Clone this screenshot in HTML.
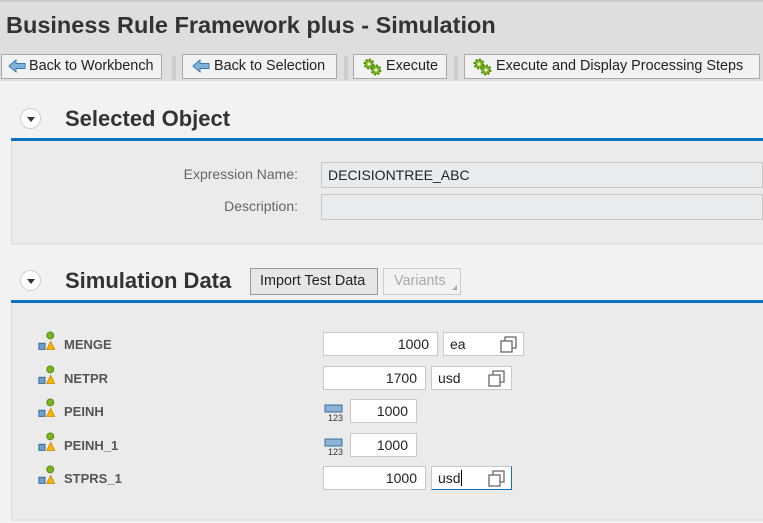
<!DOCTYPE html>
<html><head><style>
*{margin:0;padding:0;box-sizing:border-box}
body{width:763px;height:523px;overflow:hidden;background:#f2f2f2;font-family:"Liberation Sans",sans-serif;position:relative;color:#333}
.a{position:absolute}
.btn{position:absolute;top:54px;height:25px;border:1px solid #aaa;background:#f2f2f2;font-size:14.4px;line-height:23px;padding-left:6px;color:#222;white-space:nowrap}
.sep{position:absolute;top:56px;width:4px;height:24px;background:#ccc}
.inp{position:absolute;background:#fff;border:1px solid #c8c8c8;font-size:14px;line-height:22px;height:24px;color:#222}
.lbl{position:absolute;font-size:13px;font-weight:bold;color:#555}
.ic{position:absolute}
.tog{position:absolute;width:21px;height:21px;border-radius:50%;background:#fff;border:1px solid #ccc}
.tog:after{content:"";position:absolute;left:6px;top:8px;border-left:4px solid transparent;border-right:4px solid transparent;border-top:5px solid #333}
</style></head><body>
<div class="a" style="left:0;top:0;width:763px;height:53px;background:#dedede;border-top:2px solid #ccc"></div>
<div class="a" style="left:0;top:53px;width:763px;height:28px;background:#dedede"></div>
<div class="a" style="left:6px;top:12px;font-size:23.5px;font-weight:bold;color:#333">Business Rule Framework plus - Simulation</div>

<svg width="0" height="0" style="position:absolute"><defs>
<symbol id="arr" viewBox="0 0 18 14"><path d="M1 7 L8 1 L8 4.5 L17 4.5 L17 9.5 L8 9.5 L8 13 Z" fill="#7fb3d9" stroke="#3a79b0" stroke-width="1"/></symbol>
<symbol id="gear" viewBox="0 0 20 20"><circle cx="7" cy="7" r="4.5" fill="#7ab51d" stroke="#4f8a10" stroke-dasharray="2 1.5" stroke-width="2"/><circle cx="7" cy="7" r="1.5" fill="#fff"/><circle cx="14" cy="13" r="4.5" fill="#7ab51d" stroke="#4f8a10" stroke-dasharray="2 1.5" stroke-width="2"/><circle cx="14" cy="13" r="1.5" fill="#fff"/></symbol>
<symbol id="dt" viewBox="0 0 24 24"><circle cx="14" cy="5" r="4" fill="#7ab51d" stroke="#4f8a10"/><rect x="1" y="14" width="7" height="7" fill="#6fa0cc" stroke="#2a5f8f"/><path d="M10 21 L14.5 12 L19 21 Z" fill="#f5b800" stroke="#d48a00"/></symbol>
<symbol id="sel" viewBox="0 0 18 18"><rect x="1" y="5" width="11" height="11" fill="none" stroke="#666" stroke-width="1.3"/><path d="M5 5 V1 H16 V12 H12" fill="none" stroke="#666" stroke-width="1.3"/></symbol>
<symbol id="num" viewBox="0 0 20 18"><rect x="1" y="1" width="17" height="7" fill="#8db3d6" stroke="#3a6d99"/><text x="4" y="17" font-size="9" font-family="Liberation Sans" fill="#333">123</text></symbol>
</defs></svg>

<div class="btn" style="left:1px;width:161px;padding-left:27px">Back to Workbench<svg class="ic" style="left:6px;top:4px" width="18" height="14"><use href="#arr"/></svg></div>
<div class="sep" style="left:172px"></div>
<div class="btn" style="left:182px;width:155px;padding-left:31px">Back to Selection<svg class="ic" style="left:9px;top:4px" width="18" height="14"><use href="#arr"/></svg></div>
<div class="sep" style="left:344px"></div>
<div class="btn" style="left:353px;width:94px;padding-left:32px">Execute<svg class="ic" style="left:8px;top:2px" width="20" height="20"><use href="#gear"/></svg></div>
<div class="sep" style="left:454px"></div>
<div class="btn" style="left:464px;width:296px;padding-left:31px">Execute and Display Processing Steps<svg class="ic" style="left:7px;top:2px" width="20" height="20"><use href="#gear"/></svg></div>

<div class="tog" style="left:20px;top:108px"></div>
<div class="a" style="left:65px;top:106px;font-size:22px;font-weight:bold;color:#333">Selected Object</div>
<div class="a" style="left:11px;top:138px;width:752px;height:3px;background:#0a74c2"></div>
<div class="a" style="left:11px;top:141px;width:752px;height:104px;background:#ebebeb;border-left:1px solid #ddd;border-bottom:2px solid #e2e2e2"></div>
<div class="a" style="left:120px;top:166px;width:178px;text-align:right;font-size:14px;color:#666">Expression Name:</div>
<div class="a" style="left:120px;top:198px;width:178px;text-align:right;font-size:14px;color:#666">Description:</div>
<div class="inp" style="left:321px;top:162px;width:442px;height:26px;background:#e8ecef;padding-left:6px;line-height:24px">DECISIONTREE_ABC</div>
<div class="inp" style="left:321px;top:194px;width:442px;height:26px;background:#e8ecef"></div>

<div class="tog" style="left:20px;top:270px"></div>
<div class="a" style="left:65px;top:268px;font-size:22px;font-weight:bold;color:#333">Simulation Data</div>
<div class="btn" style="left:250px;top:268px;width:128px;height:27px;line-height:25px;padding-left:9px;background:#e6e6e6;border-color:#999">Import Test Data</div>
<div class="btn" style="left:383px;top:268px;width:78px;height:27px;line-height:25px;padding-left:10px;color:#aaa;border-color:#ccc">Variants<span style="position:absolute;right:3px;bottom:4px;border-left:5px solid transparent;border-bottom:5px solid #aaa"></span></div>
<div class="a" style="left:11px;top:300px;width:752px;height:3px;background:#0a74c2"></div>
<div class="a" style="left:11px;top:303px;width:752px;height:218px;background:#ebebeb;border-left:1px solid #ddd;border-bottom:2px solid #e2e2e2"></div>

<svg class="ic" style="left:38px;top:331px" width="21" height="21"><use href="#dt"/></svg><div class="lbl" style="left:64px;top:337px">MENGE</div>
<svg class="ic" style="left:38px;top:365px" width="21" height="21"><use href="#dt"/></svg><div class="lbl" style="left:64px;top:371px">NETPR</div>
<svg class="ic" style="left:38px;top:398px" width="21" height="21"><use href="#dt"/></svg><div class="lbl" style="left:64px;top:404px">PEINH</div>
<svg class="ic" style="left:38px;top:432px" width="21" height="21"><use href="#dt"/></svg><div class="lbl" style="left:64px;top:438px">PEINH_1</div>
<svg class="ic" style="left:38px;top:465px" width="21" height="21"><use href="#dt"/></svg><div class="lbl" style="left:64px;top:471px">STPRS_1</div>

<div class="inp" style="left:323px;top:332px;width:115px;text-align:right;padding-right:8px">1000</div>
<div class="inp" style="left:443px;top:332px;width:81px;padding-left:6px">ea<svg class="ic" style="left:56px;top:3px" width="18" height="18"><use href="#sel"/></svg></div>
<div class="inp" style="left:323px;top:366px;width:103px;text-align:right;padding-right:8px">1700</div>
<div class="inp" style="left:431px;top:366px;width:81px;padding-left:6px">usd<svg class="ic" style="left:56px;top:3px" width="18" height="18"><use href="#sel"/></svg></div>
<svg class="ic" style="left:324px;top:404px" width="20" height="18"><use href="#num"/></svg>
<div class="inp" style="left:350px;top:399px;width:67px;text-align:right;padding-right:8px">1000</div>
<svg class="ic" style="left:324px;top:438px" width="20" height="18"><use href="#num"/></svg>
<div class="inp" style="left:350px;top:433px;width:67px;text-align:right;padding-right:8px">1000</div>
<div class="inp" style="left:323px;top:466px;width:103px;text-align:right;padding-right:8px">1000</div>
<div class="inp" style="left:431px;top:466px;width:81px;padding-left:6px;border-right-color:#0a74c2;border-bottom-color:#0a74c2">usd<span style="display:inline-block;width:1px;height:16px;background:#000;vertical-align:-3px"></span><svg class="ic" style="left:56px;top:3px" width="18" height="18"><use href="#sel"/></svg></div>
</body></html>
